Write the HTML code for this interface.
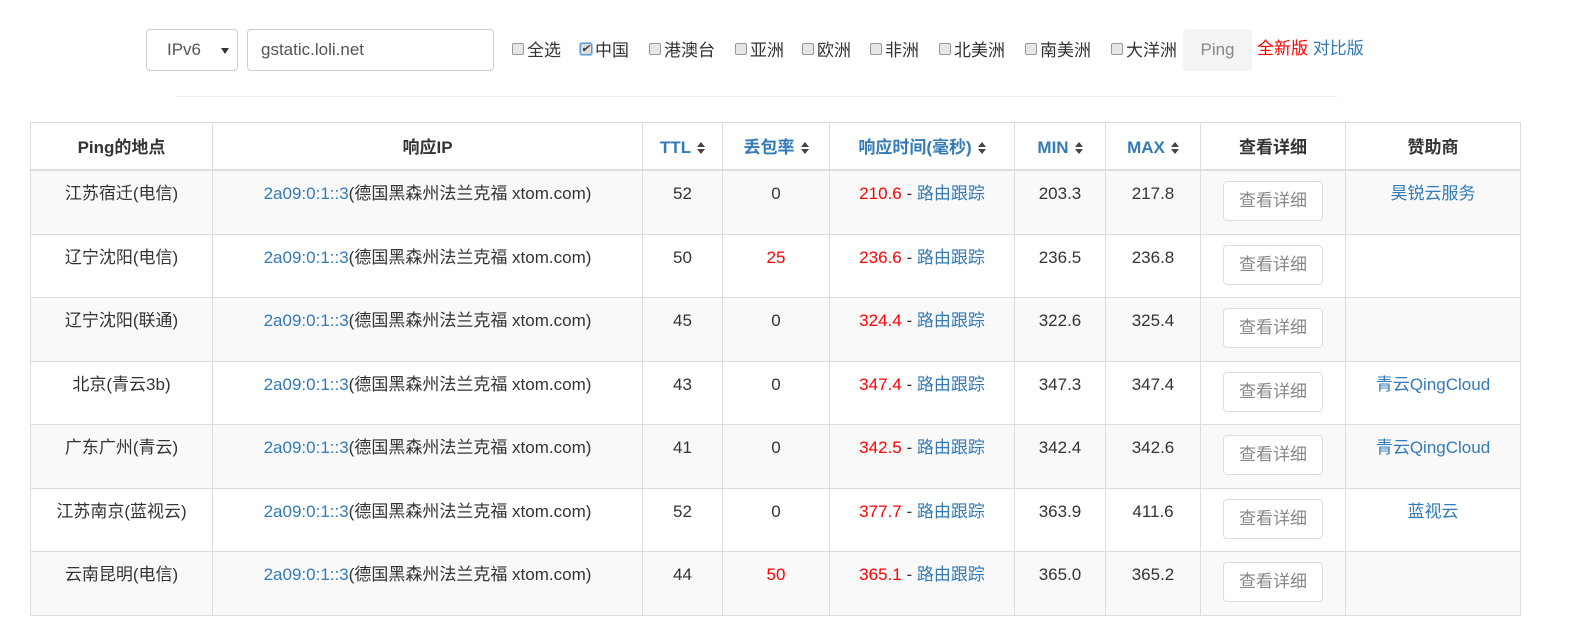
<!DOCTYPE html><html><head><meta charset="utf-8"><style>
body{margin:0;background:#fff;font-family:"Liberation Sans","Noto Sans CJK SC",sans-serif;font-size:16px;color:#333;width:1579px;height:640px;overflow:hidden;position:relative}
.a{position:absolute}
.sel{left:146px;top:29px;width:92px;height:42px;border:1px solid #ccc;border-radius:4px;box-sizing:border-box;font-size:17px;color:#555;line-height:40px;padding-left:20px}
.sel:after{content:"";position:absolute;right:8px;top:18px;border-left:4px solid transparent;border-right:4px solid transparent;border-top:6px solid #333}
.inp{left:247px;top:29px;width:247px;height:42px;border:1px solid #ccc;border-radius:4px;box-sizing:border-box;font-size:17px;color:#555;line-height:40px;padding-left:13px}
.cb{top:41px;font-size:17px;line-height:20px;color:#333;white-space:nowrap}
.cb i{display:inline-block;width:12px;height:12px;border:1px solid #999;border-radius:2px;background:#e6e6e6;vertical-align:1px;margin-right:3px;box-sizing:border-box}
.ping{left:1183px;top:29px;width:69px;height:42px;background:#f4f4f4;border-radius:4px;font-size:17px;color:#888;line-height:42px;text-align:center}
.hr{left:176px;top:96px;width:1161px;height:1px;background:#eee}
table{position:absolute;left:30px;top:122px;border-collapse:collapse;table-layout:fixed;width:1490px}
td,th{border:1px solid #ddd;text-align:center;vertical-align:top;padding:12px 0 0;line-height:22px;font-size:17px}
th{font-weight:bold;border-bottom:2px solid #ddd;height:32px;padding-top:14px}
th.b{color:#337ab7}
tbody tr:nth-child(odd){background:#f9f9f9}
.bl{color:#337ab7}.r{color:red}
.btn{display:inline-block;width:100px;height:40px;border:1px solid #ddd;border-radius:4px;box-sizing:border-box;color:#888;line-height:38px;background:#fff}
td.bt{padding-top:10px}
.s{display:inline-block;vertical-align:-1px;margin-left:6px}
</style></head><body>
<div class="a sel">IPv6</div>
<div class="a inp">gstatic.loli.net</div>
<div class="a cb" style="left:512px"><i></i>全选</div>
<div class="a cb" style="left:580px"><i style="background:#ddd;border-color:#5b9bd5;box-shadow:0 0 0 1px #a8c8ea;position:relative"><span style="position:absolute;left:0;top:-5px;font-size:11px">✔</span></i>中国</div>
<div class="a cb" style="left:649px"><i></i>港澳台</div>
<div class="a cb" style="left:735px"><i></i>亚洲</div>
<div class="a cb" style="left:802px"><i></i>欧洲</div>
<div class="a cb" style="left:870px"><i></i>非洲</div>
<div class="a cb" style="left:939px"><i></i>北美洲</div>
<div class="a cb" style="left:1025px"><i></i>南美洲</div>
<div class="a cb" style="left:1111px"><i></i>大洋洲</div>
<div class="a ping">Ping</div>
<div class="a cb" style="left:1257px;top:39px"><span style="color:red">全新版</span> <span class="bl">对比版</span></div>
<div class="a hr"></div>
<table>
<colgroup><col style="width:182px"><col style="width:430px"><col style="width:80px"><col style="width:107px"><col style="width:185px"><col style="width:91px"><col style="width:95px"><col style="width:145px"><col style="width:175px"></colgroup>
<thead><tr>
<th>Ping的地点</th><th>响应IP</th>
<th class="b">TTL<svg class="s" width="8" height="12"><path d="M4 0L8 5H0Z M0 7H8L4 12Z" fill="#444"/></svg></th>
<th class="b">丢包率<svg class="s" width="8" height="12"><path d="M4 0L8 5H0Z M0 7H8L4 12Z" fill="#444"/></svg></th>
<th class="b">响应时间(毫秒)<svg class="s" width="8" height="12"><path d="M4 0L8 5H0Z M0 7H8L4 12Z" fill="#444"/></svg></th>
<th class="b">MIN<svg class="s" width="8" height="12"><path d="M4 0L8 5H0Z M0 7H8L4 12Z" fill="#444"/></svg></th>
<th class="b">MAX<svg class="s" width="8" height="12"><path d="M4 0L8 5H0Z M0 7H8L4 12Z" fill="#444"/></svg></th>
<th>查看详细</th><th>赞助商</th></tr></thead>
<tbody>
<tr style="height:64px"><td>江苏宿迁(电信)</td><td><span class="bl">2a09:0:1::3</span>(德国黑森州法兰克福 xtom.com)</td><td>52</td><td>0</td><td><span class="r">210.6</span> - <span class="bl">路由跟踪</span></td><td>203.3</td><td>217.8</td><td class="bt"><span class="btn">查看详细</span></td><td class="bl">昊锐云服务</td></tr>
<tr style="height:63px"><td>辽宁沈阳(电信)</td><td><span class="bl">2a09:0:1::3</span>(德国黑森州法兰克福 xtom.com)</td><td>50</td><td class="r">25</td><td><span class="r">236.6</span> - <span class="bl">路由跟踪</span></td><td>236.5</td><td>236.8</td><td class="bt"><span class="btn">查看详细</span></td><td></td></tr>
<tr style="height:64px"><td>辽宁沈阳(联通)</td><td><span class="bl">2a09:0:1::3</span>(德国黑森州法兰克福 xtom.com)</td><td>45</td><td>0</td><td><span class="r">324.4</span> - <span class="bl">路由跟踪</span></td><td>322.6</td><td>325.4</td><td class="bt"><span class="btn">查看详细</span></td><td></td></tr>
<tr style="height:63px"><td>北京(青云3b)</td><td><span class="bl">2a09:0:1::3</span>(德国黑森州法兰克福 xtom.com)</td><td>43</td><td>0</td><td><span class="r">347.4</span> - <span class="bl">路由跟踪</span></td><td>347.3</td><td>347.4</td><td class="bt"><span class="btn">查看详细</span></td><td class="bl">青云QingCloud</td></tr>
<tr style="height:64px"><td>广东广州(青云)</td><td><span class="bl">2a09:0:1::3</span>(德国黑森州法兰克福 xtom.com)</td><td>41</td><td>0</td><td><span class="r">342.5</span> - <span class="bl">路由跟踪</span></td><td>342.4</td><td>342.6</td><td class="bt"><span class="btn">查看详细</span></td><td class="bl">青云QingCloud</td></tr>
<tr style="height:63px"><td>江苏南京(蓝视云)</td><td><span class="bl">2a09:0:1::3</span>(德国黑森州法兰克福 xtom.com)</td><td>52</td><td>0</td><td><span class="r">377.7</span> - <span class="bl">路由跟踪</span></td><td>363.9</td><td>411.6</td><td class="bt"><span class="btn">查看详细</span></td><td class="bl">蓝视云</td></tr>
<tr style="height:64px"><td>云南昆明(电信)</td><td><span class="bl">2a09:0:1::3</span>(德国黑森州法兰克福 xtom.com)</td><td>44</td><td class="r">50</td><td><span class="r">365.1</span> - <span class="bl">路由跟踪</span></td><td>365.0</td><td>365.2</td><td class="bt"><span class="btn">查看详细</span></td><td></td></tr>
</tbody></table>
</body></html>
